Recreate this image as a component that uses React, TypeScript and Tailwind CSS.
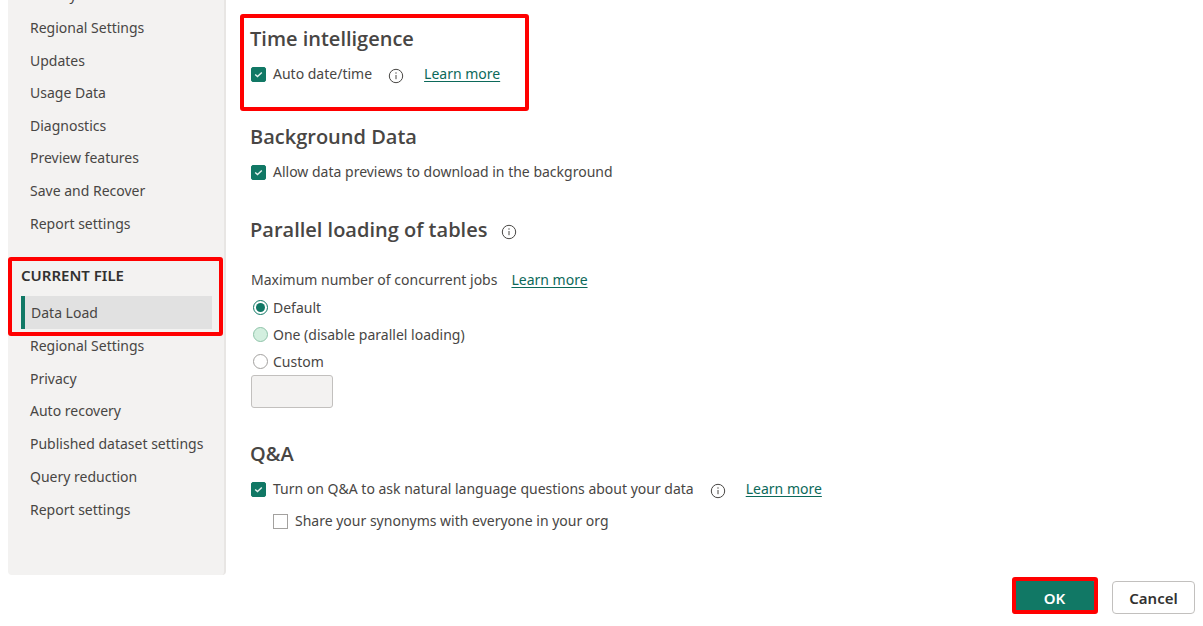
import type { ReactNode } from "react";

const globalItems = [
  "Privacy",
  "Regional Settings",
  "Updates",
  "Usage Data",
  "Diagnostics",
  "Preview features",
  "Save and Recover",
  "Report settings",
];

const fileItems = [
  "Data Load",
  "Regional Settings",
  "Privacy",
  "Auto recovery",
  "Published dataset settings",
  "Query reduction",
  "Report settings",
];

function Highlight({ className }: { className: string }) {
  return (
    <span
      aria-hidden="true"
      className={`pointer-events-none absolute rounded-[3px] border-4 border-[#ff0000] ${className}`}
    />
  );
}

function NavItem({ label, active = false }: { label: string; active?: boolean }) {
  return (
    <li>
      <a
        href="#"
        aria-current={active ? "page" : undefined}
        className={
          active
            ? "flex h-full items-center border-l-4 border-[#117865] bg-[#e1e1e1] pt-0.5 pl-1.5"
            : "flex h-full items-center pt-0.5 pl-[9px]"
        }
      >
        {label}
      </a>
    </li>
  );
}

function InfoIcon() {
  return (
    <svg viewBox="0 0 16 16" className="mt-1 size-4 shrink-0" fill="none" role="img" aria-label="Information">
      <circle cx="8" cy="8" r="6.7" stroke="#484644" strokeWidth="1" />
      <path d="M8 7v4.2" stroke="#484644" strokeWidth="1" />
      <circle cx="8" cy="5" r="0.7" fill="#484644" />
    </svg>
  );
}

function LearnMore() {
  return (
    <a href="#" className="text-[#0c695a] underline underline-offset-2">
      Learn more
    </a>
  );
}

function Checkbox({ label, checked = false }: { label: string; checked?: boolean }) {
  return (
    <label className="flex h-6 items-center gap-[7px]">
      <span className="relative flex size-[15px]">
        <input
          type="checkbox"
          defaultChecked={checked}
          className="peer size-[15px] appearance-none border border-[#a3a19f] bg-white checked:rounded-[2px] checked:border-[#117865] checked:bg-[#117865]"
        />
        <svg
          viewBox="0 0 15 15"
          className="pointer-events-none absolute inset-0 hidden size-[15px] peer-checked:block"
          fill="none"
        >
          <path d="M4.2 7.4 6.5 9.6 10.8 5.4" stroke="#e6f3f0" strokeWidth="1.4" />
        </svg>
      </span>
      {label}
    </label>
  );
}

function Radio({ label, checked = false, hover = false }: { label: string; checked?: boolean; hover?: boolean }) {
  return (
    <label className="flex h-[27px] items-center gap-[5px] pl-0.5">
      <input
        type="radio"
        name="jobs"
        defaultChecked={checked}
        className={
          hover
            ? "size-[15px] appearance-none rounded-full border border-[#8fc3a9] bg-[#d3efdf]"
            : "size-[15px] appearance-none rounded-full border border-[#a3a19f] bg-white checked:border-[#117865] checked:bg-[#117865] checked:bg-clip-content checked:p-0.5"
        }
      />
      {label}
    </label>
  );
}

function Heading({ children }: { children: ReactNode }) {
  return (
    <h2 className="font-['Open_Sans',sans-serif] text-[20px] leading-7 font-semibold text-[#484644]">{children}</h2>
  );
}

export default function App() {
  return (
    <div className="flex min-h-screen flex-col overflow-hidden bg-white font-['Noto_Sans',sans-serif] text-[14px] leading-6 text-[#484644]">
      <div className="flex pl-2">
        <nav
          aria-label="Options"
          className="-mt-[22px] w-[218px] shrink-0 rounded-b-[4px] border-r-2 border-[#e8e6e4] bg-[#f3f2f1] pr-3 pb-[50px] pl-[13px]"
        >
          <ul className="grid h-[261px] auto-rows-fr">
            {globalItems.map((item) => (
              <NavItem key={item} label={item} />
            ))}
          </ul>
          <section className="relative mt-6">
            <h2 className="pb-[9px] text-[15px] font-semibold text-[#323130]">CURRENT FILE</h2>
            <ul className="grid h-[229px] auto-rows-fr">
              {fileItems.map((item, i) => (
                <NavItem key={item} label={item} active={i === 0} />
              ))}
            </ul>
            <Highlight className="-top-1.5 -right-[11px] -left-[13px] h-[79px]" />
          </section>
        </nav>

        <main className="min-w-0 flex-1 pt-[25px] pl-6">
          <section className="relative w-fit">
            <Heading>Time intelligence</Heading>
            <div className="mt-[9px] flex items-center pl-px">
              <Checkbox label="Auto date/time" checked />
              <span className="mr-5 ml-4 flex">
                <InfoIcon />
              </span>
              <LearnMore />
            </div>
            <Highlight className="-top-[11px] -right-[29px] -bottom-[25px] -left-2.5" />
          </section>

          <section className="mt-[37px]">
            <Heading>Background Data</Heading>
            <div className="mt-[9px] pl-px">
              <Checkbox label="Allow data previews to download in the background" checked />
            </div>
          </section>

          <section className="mt-8">
            <div className="flex items-center gap-[14px]">
              <Heading>Parallel loading of tables</Heading>
              <InfoIcon />
            </div>
            <div className="pl-px">
              <p className="mt-6 flex gap-[14px]">
                Maximum number of concurrent jobs <LearnMore />
              </p>
              <div className="mt-0.5">
                <Radio label="Default" checked />
                <Radio label="One (disable parallel loading)" hover />
                <Radio label="Custom" />
              </div>
              <input
                type="text"
                disabled
                aria-label="Custom number of jobs"
                className="block h-[33px] w-[82px] rounded-[3px] border border-[#c2c0be] bg-[#f3f2f1] px-2"
              />
            </div>
          </section>

          <section className="mt-8">
            <Heading>Q&amp;A</Heading>
            <div className="mt-[9px] flex items-center pl-px">
              <Checkbox label="Turn on Q&A to ask natural language questions about your data" checked />
              <span className="mr-5 ml-4 flex">
                <InfoIcon />
              </span>
              <LearnMore />
            </div>
            <div className="mt-2 pl-[23px]">
              <Checkbox label="Share your synonyms with everyone in your org" />
            </div>
          </section>
        </main>
      </div>

      <footer className="flex justify-end gap-4 pt-1.5 pr-2 text-[15px] font-semibold">
        <div className="relative flex">
          <button type="button" className="h-[33px] w-[83px] rounded-[3px] bg-[#117865] text-white">
            OK
          </button>
          <Highlight className="-top-1 -right-0.5 bottom-0 -left-px" />
        </div>
        <button
          type="button"
          className="h-[33px] w-[83px] rounded-[4px] border border-[#c2c0be] bg-white text-[#323130]"
        >
          Cancel
        </button>
      </footer>
    </div>
  );
}
